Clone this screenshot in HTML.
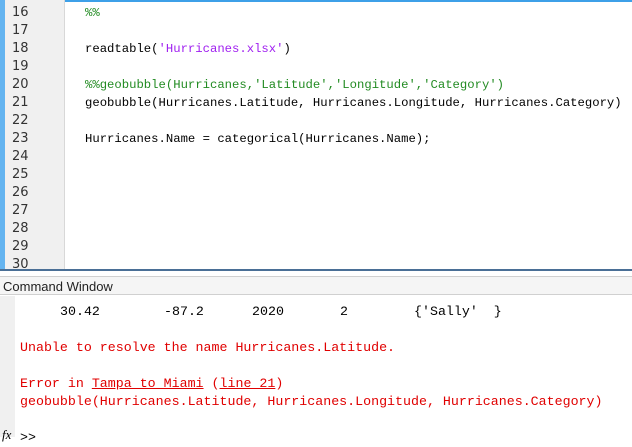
<!DOCTYPE html>
<html><head><meta charset="utf-8"><style>
body{margin:0;width:632px;height:437px;overflow:hidden;background:#fff;position:relative;font-family:"Liberation Sans",sans-serif}
.ed{position:absolute;left:0;top:0;width:632px;height:270px;background:#fff;border-top:2px solid #3da0e8;box-sizing:border-box}
.strip{position:absolute;left:0;top:0;width:5px;height:270px;background:#64b4f0}
.gut{position:absolute;left:5px;top:0;width:59px;height:270px;background:#f0f0f0;border-right:1px solid #d8d8d8}
.ln{position:absolute;left:12px;font-family:"DejaVu Sans","Liberation Sans",sans-serif;font-size:13px;color:#333;line-height:18px}
.code{position:absolute;left:85px;font-family:"Liberation Mono",monospace;font-size:12.25px;line-height:18px;white-space:pre;color:#000}
.g{color:#228b22}.p{color:#a020f0}
.sep{position:absolute;left:0;top:269px;width:632px;height:2px;background:#4a6f96}
.hdr{position:absolute;left:0;top:276px;width:632px;height:19px;background:#f5f5f5;border-top:1px solid #d0d0d0;border-bottom:1px solid #d0d0d0;font-size:13px;color:#222;line-height:19px;padding-left:3px;box-sizing:border-box}
.hw{position:absolute;left:0;top:271px;width:632px;height:5px;background:#fff}
.cg{position:absolute;left:0;top:296px;width:15px;height:141px;background:#f0f0f0}
.cm{position:absolute;font-family:"Liberation Mono",monospace;font-size:13.3px;line-height:18px;white-space:pre;color:#000}
.r{color:#e00000}
u{text-decoration:underline}
</style></head><body>
<div class="ed"></div><div class="strip"></div><div class="gut"></div>
<div class="ln" style="top:4px">16</div>
<div class="ln" style="top:22px">17</div>
<div class="ln" style="top:40px">18</div>
<div class="ln" style="top:58px">19</div>
<div class="ln" style="top:76px">20</div>
<div class="ln" style="top:94px">21</div>
<div class="ln" style="top:112px">22</div>
<div class="ln" style="top:130px">23</div>
<div class="ln" style="top:148px">24</div>
<div class="ln" style="top:166px">25</div>
<div class="ln" style="top:184px">26</div>
<div class="ln" style="top:202px">27</div>
<div class="ln" style="top:220px">28</div>
<div class="ln" style="top:238px">29</div>
<div class="ln" style="top:256px">30</div>
<div class="code g" style="top:4px">%%</div>
<div class="code" style="top:40px">readtable(<span class="p">'Hurricanes.xlsx'</span>)</div>
<div class="code g" style="top:76px">%%geobubble(Hurricanes,'Latitude','Longitude','Category')</div>
<div class="code" style="top:94px">geobubble(Hurricanes.Latitude, Hurricanes.Longitude, Hurricanes.Category)</div>
<div class="code" style="top:130px">Hurricanes.Name = categorical(Hurricanes.Name);</div>
<div class="sep"></div><div class="hw"></div>
<div class="hdr">Command Window</div>
<div class="cg"></div>
<div class="cm" style="left:60px;top:303px">30.42</div>
<div class="cm" style="left:164px;top:303px">-87.2</div>
<div class="cm" style="left:252px;top:303px">2020</div>
<div class="cm" style="left:340px;top:303px">2</div>
<div class="cm" style="left:414px;top:303px">{'Sally'  }</div>
<div class="cm r" style="left:20px;top:339px">Unable to resolve the name Hurricanes.Latitude.</div>
<div class="cm r" style="left:20px;top:375px">Error in <u>Tampa_to_Miami</u> (<u>line 21</u>)</div>
<div class="cm r" style="left:20px;top:393px">geobubble(Hurricanes.Latitude, Hurricanes.Longitude, Hurricanes.Category)</div>
<div style="position:absolute;left:2px;top:427px;font-family:'Liberation Serif',serif;font-style:italic;font-size:13px;color:#000">fx</div>
<div class="cm" style="left:20px;top:429px">&gt;&gt;</div>
</body></html>
